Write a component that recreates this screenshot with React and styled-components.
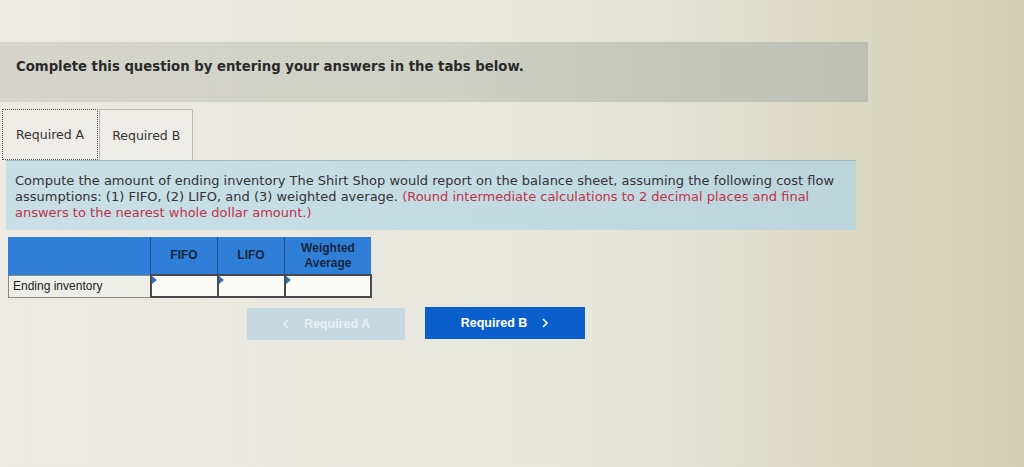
import React from 'react';
import styled, { createGlobalStyle } from 'styled-components';

const GlobalStyle = createGlobalStyle`
  html, body {
    margin: 0;
    padding: 0;
  }
  body {
    width: 1024px;
    height: 467px;
    overflow: hidden;
    background: linear-gradient(90deg, #eceae3 0%, #e8e7dd 55%, #dcdac5 80%, #d2d0b3 100%);
    font-family: "DejaVu Sans", Verdana, sans-serif;
  }
`;

const Page = styled.div`
  padding-top: 42px;
  width: 1024px;
  height: 467px;
  box-sizing: border-box;
`;

const Banner = styled.div`
  width: 868px;
  height: 60px;
  box-sizing: border-box;
  padding: 17px 16px 0;
  background: linear-gradient(90deg, #d5d5cd 0%, #cfd0c6 50%, #bdbfb1 100%);
  color: #2a2a2a;
  font-size: 13.25px;
  font-weight: bold;
`;

const Tabs = styled.div`
  display: flex;
  margin-top: 7px;
  padding-left: 2px;
`;

const Tab = styled.div`
  height: 51px;
  box-sizing: border-box;
  padding: 0 ${p => (p.$active ? 13 : 12)}px;
  display: flex;
  align-items: center;
  font-size: 12.5px;
  color: #333;
  background: #edece6;
  border: 1px ${p => (p.$active ? 'dotted #555' : 'solid #b9b9b3')};
  border-bottom: ${p => (p.$active ? '1px dotted #555' : 'none')};
  margin-right: 1px;
`;

const Panel = styled.div`
  margin-left: 6px;
  width: 850px;
  height: 70px;
  box-sizing: border-box;
  padding: 12px 9px 0;
  background: linear-gradient(90deg, #c7dfe5 0%, #c3dce3 60%, #bcd5dc 100%);
  border-top: 1px solid #9fb6bd;
  font-size: 13px;
  line-height: 16px;
  color: #333;
`;

const Note = styled.span`
  color: #c0334a;
`;

const Table = styled.table`
  margin: 7px 0 0 8px;
  border-collapse: collapse;
  font-family: "Liberation Sans", Arial, sans-serif;
  font-size: 12px;
`;

const HeadCell = styled.th`
  background: #2f7fd8;
  color: #16273c;
  font-weight: bold;
  height: 37px;
  width: ${p => p.$w}px;
  padding: 0;
  text-align: center;
  line-height: 15px;
  border-left: 1px solid ${p => (p.$first ? '#2f7fd8' : '#24548f')};
`;

const LabelCell = styled.td`
  background: #eeeee9;
  border: 1px solid #8a8a86;
  height: 21px;
  padding: 0 4px;
  color: #222;
`;

const InputCell = styled.td`
  position: relative;
  background: #fafaf6;
  border: 2px solid #4a4a4c;
  padding: 0;
  &::before {
    content: '';
    position: absolute;
    left: 0;
    top: 0;
    border-left: 5px solid #2f6fc0;
    border-top: 4px solid transparent;
    border-bottom: 4px solid transparent;
  }
`;

const Nav = styled.div`
  display: flex;
  align-items: flex-start;
  gap: 20px;
  margin: 9px 0 0 247px;
`;

const NavButton = styled.div`
  width: ${p => (p.$disabled ? 158 : 160)}px;
  height: 32px;
  display: flex;
  align-items: center;
  justify-content: center;
  gap: 14px;
  font-family: "Liberation Sans", Arial, sans-serif;
  font-size: 12.5px;
  font-weight: bold;
  background: ${p => (p.$disabled ? '#c6d9e1' : '#0b5fca')};
  color: ${p => (p.$disabled ? '#e9eff1' : '#fff')};
  margin-top: ${p => (p.$disabled ? 1 : 0)}px;
`;

const Chevron = ({ left }) => (
  <svg width="8" height="10" viewBox="0 0 8 10">
    <path
      d={left ? 'M6 1 L2 5 L6 9' : 'M2 1 L6 5 L2 9'}
      fill="none"
      stroke="currentColor"
      strokeWidth="1.6"
    />
  </svg>
);

export default function App() {
  return (
    <>
      <GlobalStyle />
      <Page>
        <Banner>Complete this question by entering your answers in the tabs below.</Banner>
        <Tabs>
          <Tab $active>Required A</Tab>
          <Tab>Required B</Tab>
        </Tabs>
        <Panel>
          Compute the amount of ending inventory The Shirt Shop would report on the balance sheet, assuming the following cost flow
          assumptions: (1) FIFO, (2) LIFO, and (3) weighted average.{' '}
          <Note>(Round intermediate calculations to 2 decimal places and final answers to the nearest whole dollar amount.)</Note>
        </Panel>
        <Table>
          <thead>
            <tr>
              <HeadCell $w={141} $first />
              <HeadCell $w={66}>FIFO</HeadCell>
              <HeadCell $w={66}>LIFO</HeadCell>
              <HeadCell $w={86}>
                Weighted
                <br />
                Average
              </HeadCell>
            </tr>
          </thead>
          <tbody>
            <tr>
              <LabelCell>Ending inventory</LabelCell>
              <InputCell />
              <InputCell />
              <InputCell />
            </tr>
          </tbody>
        </Table>
        <Nav>
          <NavButton $disabled>
            <Chevron left />
            Required A
          </NavButton>
          <NavButton>
            Required B
            <Chevron />
          </NavButton>
        </Nav>
      </Page>
    </>
  );
}
